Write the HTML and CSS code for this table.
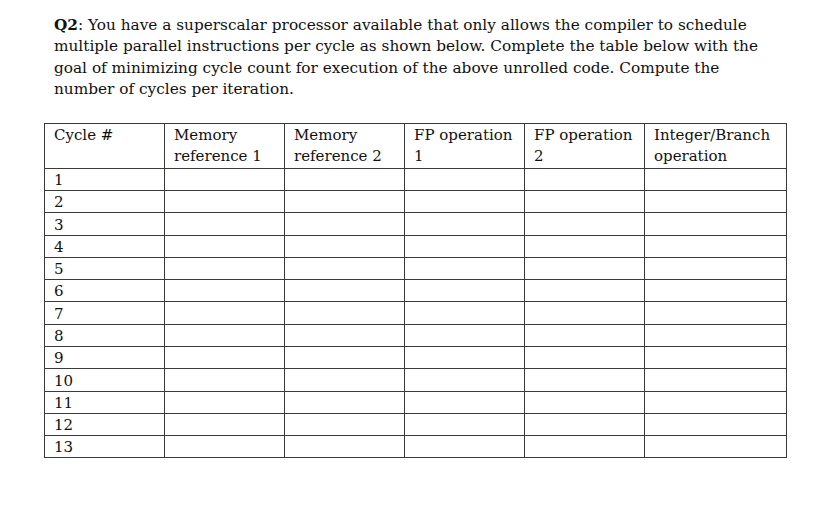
FILE: index.html
```html
<!DOCTYPE html>
<html>
<head>
<meta charset="utf-8">
<link rel="stylesheet" href="styles.css">
</head>
<body>
<p class="question"><b>Q2</b>: You have a superscalar processor available that only allows the compiler to schedule<br>multiple parallel instructions per cycle as shown below. Complete the table below with the<br>goal of minimizing cycle count for execution of the above unrolled code. Compute the<br>number of cycles per iteration.</p>
<table class="sched">
<colgroup><col class="c1"><col class="c2"><col class="c3"><col class="c4"><col class="c5"><col class="c6"></colgroup>
<tr class="head"><td>Cycle #</td><td>Memory<br>reference 1</td><td>Memory<br>reference 2</td><td>FP operation<br>1</td><td>FP operation<br>2</td><td>Integer/Branch<br>operation</td></tr>
<tr><td>1</td><td></td><td></td><td></td><td></td><td></td></tr>
<tr><td>2</td><td></td><td></td><td></td><td></td><td></td></tr>
<tr><td>3</td><td></td><td></td><td></td><td></td><td></td></tr>
<tr><td>4</td><td></td><td></td><td></td><td></td><td></td></tr>
<tr><td>5</td><td></td><td></td><td></td><td></td><td></td></tr>
<tr><td>6</td><td></td><td></td><td></td><td></td><td></td></tr>
<tr><td>7</td><td></td><td></td><td></td><td></td><td></td></tr>
<tr><td>8</td><td></td><td></td><td></td><td></td><td></td></tr>
<tr><td>9</td><td></td><td></td><td></td><td></td><td></td></tr>
<tr><td>10</td><td></td><td></td><td></td><td></td><td></td></tr>
<tr><td>11</td><td></td><td></td><td></td><td></td><td></td></tr>
<tr><td>12</td><td></td><td></td><td></td><td></td><td></td></tr>
<tr><td>13</td><td></td><td></td><td></td><td></td><td></td></tr>
</table>
</body>
</html>
```
FILE: styles.css
```css
html, body { margin: 0; padding: 0; background: #fff; }
body {
  font-family: "DejaVu Serif", "Liberation Serif", serif;
  color: #111;
}
.question {
  margin: 0;
  padding: 15px 0 0 54px;
  font-size: 15.3px;
  line-height: 21.4px;
  white-space: nowrap;
}
.sched {
  margin: 22px 0 0 44px;
  border-collapse: collapse;
  table-layout: fixed;
  width: 742px;
  font-size: 15px;
}
.c1, .c2, .c3, .c4, .c5 { width: 120px; }
.c6 { width: 142px; }
.sched td {
  border: 1px solid #3a3a3a;
  padding: 0 0 0 9px;
  height: 21.3px;
  line-height: 20px;
  vertical-align: bottom;
  white-space: nowrap;
}
.sched .head td {
  height: 43px;
  vertical-align: top;
  line-height: 21px;
  padding-top: 1px;
}
```
